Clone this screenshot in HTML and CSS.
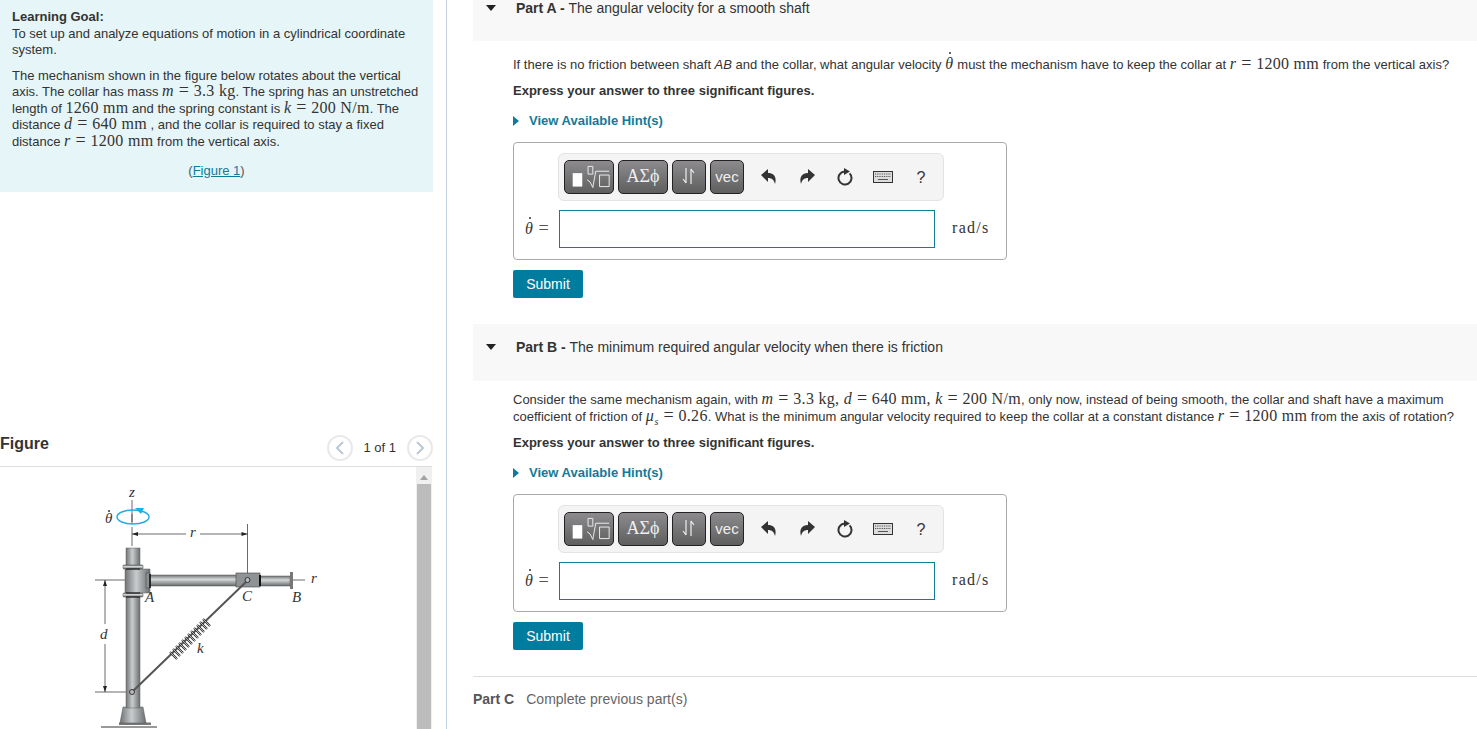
FILE: index.html
```html
<!DOCTYPE html>
<html lang="en">
<head>
<meta charset="utf-8">
<title>Part A - The angular velocity for a smooth shaft</title>
<link rel="stylesheet" href="styles.css">
</head>
<body>
<svg class="defs" width="0" height="0" aria-hidden="true">
  <defs>
    <linearGradient id="postV" x1="0" x2="1" y1="0" y2="0"><stop offset="0" stop-color="#6f7375"/><stop offset=".45" stop-color="#c9cccd"/><stop offset="1" stop-color="#6a6e70"/></linearGradient>
    <linearGradient id="postH" x1="0" x2="0" y1="0" y2="1"><stop offset="0" stop-color="#707476"/><stop offset=".4" stop-color="#d6d8d9"/><stop offset="1" stop-color="#666a6c"/></linearGradient>
  </defs>
</svg>
<div class="layout">
  <aside class="left">
    <section class="goal">
      <strong>Learning Goal:</strong><br>
      To set up and analyze equations of motion in a cylindrical coordinate<br>system.
      <p class="goal-p">The mechanism shown in the figure below rotates about the vertical<br>
      axis. The collar has mass <span class="math"><i>m</i><span class="eq">=</span>3.3 kg</span>. The spring has an unstretched<br>
      length of <span class="math">1260 mm</span> and the spring constant is <span class="math"><i>k</i><span class="eq">=</span>200 N/m</span>. The<br>
      distance <span class="math"><i>d</i><span class="eq">=</span>640 mm</span> , and the collar is required to stay a fixed<br>
      distance <span class="math"><i>r</i><span class="eq">=</span>1200 mm</span> from the vertical axis.</p>
      <p class="fig-link">(<a href="#figure">Figure 1</a>)</p>
    </section>
    <div class="fig-head" id="figure">
      <h2>Figure</h2>
      <div class="pager">
        <span class="circle"><svg width="10" height="14" viewBox="0 0 10 14"><path d="M8 1 2 7l6 6" fill="none" stroke="#b9c8d6" stroke-width="2"/></svg></span>
        <span class="count">1 of 1</span>
        <span class="circle"><svg width="10" height="14" viewBox="0 0 10 14"><path d="m2 1 6 6-6 6" fill="none" stroke="#b9c8d6" stroke-width="2"/></svg></span>
      </div>
    </div>
    <div class="fig-pane">
      <svg class="diagram" width="416" height="262" viewBox="0 467 416 262">
        <g stroke="#444" stroke-width=".8" fill="none">
          <path d="M132 500V524M132 527V546"/>
          <path d="M132 534H186M200 534H247.500M247.500 524V580"/>
          <path d="M95 580H305"/>
          <path d="M105 580V624M105 644V692M95 692H132"/>
        </g>
        <g fill="#222">
          <path d="m132 534 6-2v4zM247.500 534l-6-2v4zM105 580l-2 6h4zM105 692l-2-6h4z"/>
        </g>
        <ellipse cx="133" cy="517" rx="16" ry="7" fill="none" stroke="#25ace6" stroke-width="1.500"/>
        <path d="m135 508 9 0-3 6z" fill="#25ace6"/>
        <path d="M132 514V522" stroke="#444" stroke-width=".8"/>
        <rect x="119" y="722.500" width="32" height="2.500" fill="#777"/>
        <path d="M101 727H157" stroke="#999" stroke-width="2"/>
        <path d="M123 707h20l3 16h-26z" fill="url(#postV)" stroke="#555" stroke-width=".5"/>
        <rect x="126" y="548" width="14" height="160" fill="url(#postV)" stroke="#666" stroke-width=".5"/>
        <rect x="150" y="575" width="90" height="11" fill="url(#postH)" stroke="#555" stroke-width=".5"/>
        <rect x="260" y="576" width="30" height="10" fill="url(#postH)" stroke="#555" stroke-width=".5"/>
        <rect x="290" y="572" width="3" height="17" fill="#777"/>
        <path d="M125 569h25v24h-25z" fill="url(#postV)" stroke="#666" stroke-width=".5"/>
        <rect x="146" y="573" width="4" height="15" fill="#8b8f91" stroke="#444" stroke-width=".5"/>
        <path d="M150 574v14" stroke="#111" stroke-width="1.500"/>
        <rect x="123" y="565" width="20" height="4" rx="1" fill="url(#postH)" stroke="#444" stroke-width=".5"/>
        <rect x="123" y="593" width="20" height="4" rx="1" fill="url(#postH)" stroke="#444" stroke-width=".5"/>
        <path d="M126 569h14M126 593h14M126 597h14" stroke="#111" stroke-width="1"/>
        <rect x="236" y="573" width="24" height="14" fill="#8f9395" stroke="#444" stroke-width=".6"/>
        <path d="M260 575v11" stroke="#111" stroke-width="2"/>
        <path d="M132 692 248 580" stroke="#555" stroke-width="2"/>
        <path d="M170 652l7 7m-4-10l7 7m-4-10l7 7m-4-10l7 7m-4-10l7 7m-4-10l7 7m-4-10l7 7m-4-10l7 7m-4-10l7 7m-4-10l7 7m-4-10l7 7m-4-10l7 7" stroke="#333" stroke-width="2.200" fill="none"/>
        <path d="M170 652l7 7m-4-10l7 7m-4-10l7 7m-4-10l7 7m-4-10l7 7m-4-10l7 7m-4-10l7 7m-4-10l7 7m-4-10l7 7m-4-10l7 7m-4-10l7 7m-4-10l7 7" stroke="#b5b8ba" stroke-width="1" fill="none"/>
        <circle cx="132" cy="692" r="2.500" fill="#bbb" stroke="#333"/>
        <circle cx="247.500" cy="580" r="2.500" fill="#bbb" stroke="#333"/>
        <circle cx="109" cy="511" r="1" fill="#333"/>
        <g class="fig-label">
          <text x="129" y="497">z</text>
          <text x="105" y="523">θ</text>
          <text x="190" y="537">r</text>
          <text x="311" y="583">r</text>
          <text x="145" y="602">A</text>
          <text x="242" y="601">C</text>
          <text x="292" y="602">B</text>
          <text x="100" y="639">d</text>
          <text x="197" y="653">k</text>
        </g>
      </svg>
      <div class="scrollbar"><span class="up"></span><span class="thumb"></span></div>
    </div>
  </aside>
  <main class="right">
    <section class="part">
      <h3 class="part-head first"><span class="caret"></span><span><b>Part A -</b> The angular velocity for a smooth shaft</span></h3>
      <div class="part-body">
        <p class="text single">If there is no friction between shaft <i>AB</i> and the collar, what angular velocity <span class="math"><i class="dot">θ</i></span> must the mechanism have to keep the collar at <span class="math"><i>r</i><span class="eq">=</span>1200 mm</span> from the vertical axis?</p>
        <p class="express">Express your answer to three significant figures.</p>
        <p class="hint"><span class="hint-caret"></span>View Available Hint(s)</p>
        <div class="answer">
          <div class="toolbar">
            <span class="tbtn wide"><svg width="50" height="33" viewBox="0 0 50 33"><path d="M8 13h10v14H8z" fill="#fff"/><path d="M24 6h5v8h-5zM36 15h10v12H36z" fill="none" stroke="#eee"/><path d="M23 20l3 2 3 6 3-17h14" fill="none" stroke="#eee"/></svg></span>
            <span class="tbtn wide greek">ΑΣϕ</span>
            <span class="tbtn narrow"><svg width="16" height="20" viewBox="0 0 16 20"><path d="M5 2v15M5 17l-3-4M10 18V3M10 3l3 4" fill="none" stroke="#eee" stroke-width="1.200"/></svg></span>
            <span class="tbtn narrow">vec</span>
            <span class="ticons">
              <svg width="18" height="18" viewBox="0 0 18 18"><path d="M1 7l7-6v4c6 0 9 4 7 11-1-4-3-6-7-6v4z" fill="#333"/></svg>
              <svg width="18" height="18" viewBox="0 0 18 18"><path d="M17 7l-7-6v4C4 5 1 9 3 16c1-4 3-6 7-6v4z" fill="#333"/></svg>
              <svg width="18" height="18" viewBox="0 0 18 18"><path d="M13.600 5.400A6.500 6.500 0 1 1 8.500 3.500" fill="none" stroke="#333" stroke-width="2"/><path d="M8 0l6 3.500-6 3.500z" fill="#333"/></svg>
              <svg width="20" height="14" viewBox="0 0 20 14"><rect x=".5" y="1.500" width="19" height="11" fill="#ddd" stroke="#333"/><path d="M2 4h16M2 6.500h16" stroke="#555" stroke-dasharray="1 .8"/><path d="M5 9.500h10" stroke="#555"/></svg>
              <span class="qmark">?</span>
            </span>
          </div>
          <div class="answer-row">
            <span class="math label"><i class="dot">θ</i><span class="eq">=</span></span>
            <span class="field"></span>
            <span class="math unit">rad/s</span>
          </div>
        </div>
        <span class="submit">Submit</span>
      </div>
    </section>
    <section class="part">
      <h3 class="part-head second"><span class="caret"></span><span><b>Part B -</b> The minimum required angular velocity when there is friction</span></h3>
      <div class="part-body">
        <p class="text">Consider the same mechanism again, with <span class="math"><i>m</i><span class="eq">=</span>3.3 kg, <i>d</i><span class="eq">=</span>640 mm, <i>k</i><span class="eq">=</span>200 N/m</span>, only now, instead of being smooth, the collar and shaft have a maximum<br>
        coefficient of friction of <span class="math"><i>μ<sub>s</sub></i><span class="eq">=</span>0.26</span>. What is the minimum angular velocity required to keep the collar at a constant distance <span class="math"><i>r</i><span class="eq">=</span>1200 mm</span> from the axis of rotation?</p>
        <p class="express">Express your answer to three significant figures.</p>
        <p class="hint"><span class="hint-caret"></span>View Available Hint(s)</p>
        <div class="answer">
          <div class="toolbar">
            <span class="tbtn wide"><svg width="50" height="33" viewBox="0 0 50 33"><path d="M8 13h10v14H8z" fill="#fff"/><path d="M24 6h5v8h-5zM36 15h10v12H36z" fill="none" stroke="#eee"/><path d="M23 20l3 2 3 6 3-17h14" fill="none" stroke="#eee"/></svg></span>
            <span class="tbtn wide greek">ΑΣϕ</span>
            <span class="tbtn narrow"><svg width="16" height="20" viewBox="0 0 16 20"><path d="M5 2v15M5 17l-3-4M10 18V3M10 3l3 4" fill="none" stroke="#eee" stroke-width="1.200"/></svg></span>
            <span class="tbtn narrow">vec</span>
            <span class="ticons">
              <svg width="18" height="18" viewBox="0 0 18 18"><path d="M1 7l7-6v4c6 0 9 4 7 11-1-4-3-6-7-6v4z" fill="#333"/></svg>
              <svg width="18" height="18" viewBox="0 0 18 18"><path d="M17 7l-7-6v4C4 5 1 9 3 16c1-4 3-6 7-6v4z" fill="#333"/></svg>
              <svg width="18" height="18" viewBox="0 0 18 18"><path d="M13.600 5.400A6.500 6.500 0 1 1 8.500 3.500" fill="none" stroke="#333" stroke-width="2"/><path d="M8 0l6 3.500-6 3.500z" fill="#333"/></svg>
              <svg width="20" height="14" viewBox="0 0 20 14"><rect x=".5" y="1.500" width="19" height="11" fill="#ddd" stroke="#333"/><path d="M2 4h16M2 6.500h16" stroke="#555" stroke-dasharray="1 .8"/><path d="M5 9.500h10" stroke="#555"/></svg>
              <span class="qmark">?</span>
            </span>
          </div>
          <div class="answer-row">
            <span class="math label"><i class="dot">θ</i><span class="eq">=</span></span>
            <span class="field"></span>
            <span class="math unit">rad/s</span>
          </div>
        </div>
        <span class="submit">Submit</span>
      </div>
    </section>
    <footer class="part-c"><b>Part C</b><span>Complete previous part(s)</span></footer>
  </main>
</div>
</body>
</html>
```
FILE: styles.css
```css
* { box-sizing: border-box; }
html, body { margin: 0; height: 729px; overflow: hidden; }
body { font: 13px/17px "Liberation Sans", Arial, sans-serif; color: #333; background: #fff; }
.defs { position: absolute; }
.layout { display: flex; height: 729px; overflow: hidden; }

.left { width: 447px; flex: none; border-right: 1px solid #c6d4e2; }
.goal { width: 433px; height: 192px; background: #e6f5f7; padding: 9px 12px 0; line-height: 16.5px; white-space: nowrap; }
.goal strong { font-weight: bold; }
.goal-p { margin: 9px 0 0; }
.fig-link { margin: 13px 0 0; text-align: center; color: #555; }
.fig-link a { color: #127a9a; }

.math { font-family: "Liberation Serif", "Times New Roman", serif; font-size: 16px; line-height: 0; letter-spacing: .3px; }
.math i { letter-spacing: .7px; }
.eq { padding: 0 4.500px; font-size: 18px; line-height: 0; }
.dot { position: relative; }
.dot::before { content: ""; position: absolute; left: 3.500px; top: -3px; width: 2px; height: 2px; border-radius: 50%; background: #333; }
sub { font-size: 10px; line-height: 0; }

.fig-head { width: 433px; height: 31px; margin-top: 244px; display: flex; justify-content: space-between; position: relative; }
.fig-head::after { content: ""; position: absolute; left: 0; right: 1px; bottom: 0; border-bottom: 1px solid #ddd; }
.fig-head h2 { margin: 0; font-size: 16px; line-height: 16px; font-weight: bold; }
.pager { display: flex; align-items: center; height: 23px; }
.circle { width: 26px; height: 26px; border: 2px solid #e8e8e8; border-radius: 50%; display: flex; align-items: center; justify-content: center; }
.count { margin: 0 11px 0 10px; }

.fig-pane { display: flex; width: 433px; height: 262px; }
.diagram { flex: none; display: block; }
.fig-label text { font: italic 15px "Liberation Serif", serif; fill: #333; }
.scrollbar { width: 16px; background: #f0f0f0; display: flex; flex-direction: column; align-items: center; }
.up { margin-top: 8px; width: 0; height: 0; border: 4px solid transparent; border-top: 0; border-bottom: 5px solid #a3a3a3; }
.thumb { margin-top: 4px; width: 14px; flex: 1; background: #bcbcbc; }

.right { flex: 1; min-width: 0; padding-left: 26px; }
.part-head { margin: 0; display: flex; background: #f8f8f8; font-size: 14px; font-weight: normal; line-height: 16px; }
.part-head b { font-weight: bold; }
.part-head.first { height: 41px; }
.part-head.second { height: 57px; padding-top: 15px; }
.caret { width: 0; height: 0; margin: 5px 20px 0 13px; border: 5.500px solid transparent; border-top: 6px solid #222; border-bottom: 0; }
.part-body { padding-left: 40px; }
.text { margin: 0; padding-top: 10px; white-space: nowrap; }
.text.single { padding-top: 15px; }
.express { margin: 9px 0 0; font-weight: bold; }
.hint { margin: 13px 0 0; font-weight: bold; color: #127a9a; display: flex; align-items: center; }
.hint-caret { width: 0; height: 0; margin-right: 10px; border: 5px solid transparent; border-left: 6px solid #127a9a; border-right: 0; }

.answer { width: 494px; height: 118px; margin-top: 13px; border: 1px solid #aaa; border-radius: 4px; padding: 10px 0 0 44px; }
.toolbar { width: 386px; height: 48px; background: #f4f4f4; border: 1px solid #e3e3e3; border-radius: 6px; display: flex; align-items: center; gap: 4px; padding-left: 5px; }
.tbtn { height: 34px; display: flex; align-items: center; justify-content: center; border: 1px solid #222; border-radius: 5px; background: linear-gradient(#8c8a8d, #5f5f5f); color: #eee; font-size: 15px; padding-bottom: 2px; }
.tbtn.wide { width: 50px; }
.tbtn.narrow { width: 34px; }
.greek { font-family: "Liberation Serif", serif; font-size: 18px; }
.ticons { display: flex; align-items: center; margin-left: 2px; }
.ticons svg, .qmark { width: 38px; flex: none; text-align: center; }
.qmark { font-size: 16px; }
.answer-row { display: flex; align-items: center; margin: 9px 0 0 -33px; }
.label { width: 33px; height: 38px; line-height: 38px; white-space: nowrap; margin-right: 1px; }
.label .eq { padding: 0 0 0 5px; color: #555; }
.field { width: 376px; height: 38px; background: #fff; border: 1px solid #127a9a; }
.unit { margin-left: 17px; margin-top: -2px; letter-spacing: 1.300px; line-height: 20px; }
.submit { display: block; width: 70px; height: 28px; margin-top: 10px; background: #007c9e; color: #fff; border-radius: 2px; text-align: center; line-height: 28px; font-size: 14px; }
.part:first-child .submit { margin-bottom: 26px; }
.part-c { margin-top: 26px; border-top: 1px solid #ddd; padding-top: 14px; color: #666; display: flex; gap: 12px; font-size: 14px; }
.part-c b { color: #555; }
```
